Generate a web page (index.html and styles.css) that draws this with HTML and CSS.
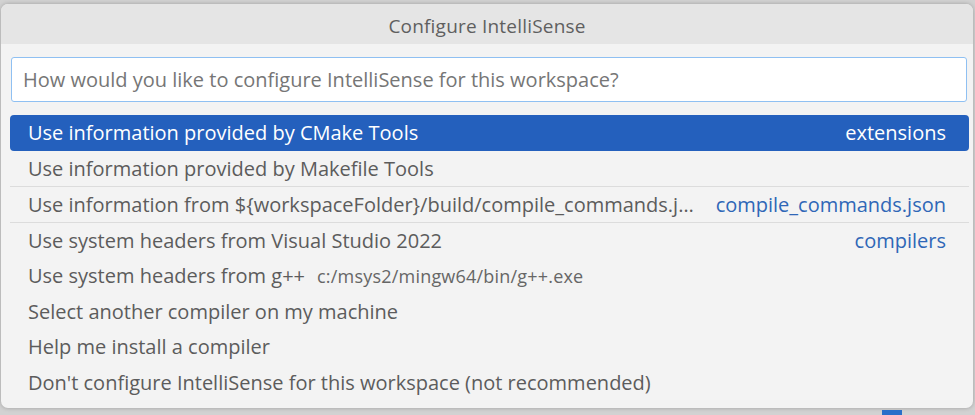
FILE: index.html
```html
<!DOCTYPE html>
<html lang="en">
<head>
<meta charset="utf-8">
<title>Configure IntelliSense</title>
<link rel="stylesheet" href="styles.css">
</head>
<body>
<div class="picker">
  <div class="picker-title">Configure IntelliSense</div>
  <div class="picker-body">
    <div class="picker-input">
      <input type="text" placeholder="How would you like to configure IntelliSense for this workspace?">
    </div>
    <ul class="picker-list">
      <li class="item selected">
        <span class="label">Use information provided by CMake Tools</span>
        <span class="group">extensions</span>
      </li>
      <li class="item">
        <span class="label">Use information provided by Makefile Tools</span>
      </li>
      <li class="item sep">
        <span class="label">Use information from ${workspaceFolder}/build/compile_commands.json</span>
        <span class="group">compile_commands.json</span>
      </li>
      <li class="item sep">
        <span class="label">Use system headers from Visual Studio 2022</span>
        <span class="group">compilers</span>
      </li>
      <li class="item">
        <span class="label">Use system headers from g++<span class="desc">c:/msys2/mingw64/bin/g++.exe</span></span>
      </li>
      <li class="item">
        <span class="label">Select another compiler on my machine</span>
      </li>
      <li class="item">
        <span class="label">Help me install a compiler</span>
      </li>
      <li class="item">
        <span class="label">Don't configure IntelliSense for this workspace (not recommended)</span>
      </li>
    </ul>
  </div>
</div>
<div class="underlay">
  <span class="underlay-check"></span>
  <span class="underlay-text">VEI</span>
</div>
</body>
</html>
```

FILE: styles.css
```css
html, body {
  margin: 0;
  padding: 0;
}

body {
  width: 975px;
  height: 415px;
  overflow: hidden;
  background: #d2d2d2;
  font-family: "Open Sans", "Noto Sans", sans-serif;
  position: relative;
}

.picker {
  margin: 4px 2px 0 1px;
  width: 972px;
  height: 404px;
  background: #f3f3f3;
  border-radius: 7px;
  box-shadow: 0 0 4px rgba(0, 0, 0, 0.25);
  overflow: hidden;
  display: flex;
  flex-direction: column;
}

.picker-title {
  height: 40px;
  box-sizing: border-box;
  padding-top: 3px;
  flex: none;
  background: #e5e5e5;
  color: #5f5f5f;
  font-size: 19px;
  display: flex;
  align-items: center;
  justify-content: center;
  letter-spacing: 0.2px;
}

.picker-body {
  padding: 13px 4px 0 9px;
}

.picker-input {
  margin: 0 2px 0 1px;
  height: 45px;
  box-sizing: border-box;
  border: 1px solid #8fc0f2;
  border-radius: 3px;
  background: #ffffff;
  display: flex;
  align-items: center;
}

.picker-input input {
  border: none;
  outline: none;
  background: transparent;
  width: 100%;
  padding: 0 11px;
  font-family: inherit;
  font-size: 20px;
  color: #333;
}

.picker-input input::placeholder {
  color: #767676;
}

.picker-list {
  list-style: none;
  margin: 13px 0 0 0;
  padding: 0;
}

.item {
  height: 35.7px;
  box-sizing: border-box;
  padding: 0 23px 0 18px;
  display: flex;
  align-items: center;
  gap: 20px;
  font-size: 20px;
  color: #5c5c5c;
  border-radius: 4px;
  white-space: nowrap;
}

.item.sep {
  border-top: 1px solid #dcdcdc;
  border-radius: 0;
}

.item .label {
  flex: 1;
  min-width: 0;
  overflow: hidden;
  text-overflow: ellipsis;
}

.item .group {
  flex: none;
  color: #2f67b7;
}

.item .desc {
  font-size: 18px;
  letter-spacing: 0.2px;
  color: #666;
  margin-left: 12px;
}

.item.selected {
  background: #2460bd;
  color: #ffffff;
}

.item.selected .group {
  color: #ffffff;
}

.underlay {
  position: absolute;
  left: 0;
  top: 408px;
  width: 975px;
  height: 7px;
  overflow: hidden;
}

.underlay-check {
  position: absolute;
  left: 882px;
  top: 2px;
  width: 20px;
  height: 12px;
  background: #2a6fc9;
}

.underlay-text {
  position: absolute;
  left: 938px;
  top: 1px;
  font-size: 18px;
  color: #333;
  font-weight: 600;
}
```
